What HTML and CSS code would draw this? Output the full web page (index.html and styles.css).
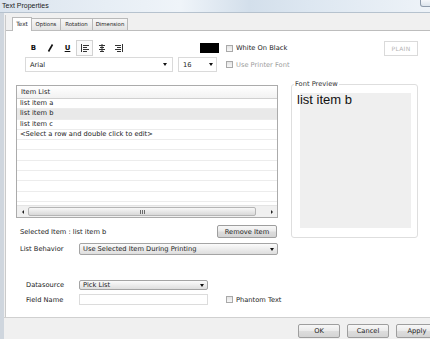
FILE: index.html
```html
<!DOCTYPE html>
<html>
<head>
<meta charset="utf-8">
<link rel="stylesheet" href="styles.css">
</head>
<body>
<div class="win">
  <div class="titlebar">
    <span class="title">Text Properties</span>
    <span class="closebtn"></span>
  </div>
  <div class="frame">
    <div class="tabctl">
      <div class="tabs">
        <div class="tab active w20">Text</div>
        <div class="tab w29">Options</div>
        <div class="tab w32">Rotation</div>
        <div class="tab w35">Dimension</div>
      </div>
      <div class="page">
        <div class="toolbar">
          <div class="tb"><span class="gb">B</span></div>
          <div class="tb"><svg width="7" height="8" viewBox="0 0 7 8"><path d="M1.5 7.5 L5.5 0.5" stroke="#111" stroke-width="1.6"/></svg></div>
          <div class="tb"><span class="gb gu">U</span></div>
          <div class="tb pressed"><svg width="8" height="8" viewBox="0 0 8 8"><path d="M0.5 0v8 M2 1.5h6 M2 3.5h4 M2 5.5h6 M2 7.5h4" stroke="#333" stroke-width="1"/></svg></div>
          <div class="tb"><svg width="8" height="8" viewBox="0 0 8 8"><path d="M4 0v8 M1 1.5h6 M2 3.5h4 M1 5.5h6 M2 7.5h4" stroke="#333" stroke-width="1"/></svg></div>
          <div class="tb"><svg width="8" height="8" viewBox="0 0 8 8"><path d="M7.5 0v8 M0 1.5h6 M2 3.5h4 M0 5.5h6 M2 7.5h4" stroke="#333" stroke-width="1"/></svg></div>
          <div class="swatch"></div>
          <div class="chk ml7"></div>
          <span class="chklabel">White On Black</span>
          <div class="plain">PLAIN</div>
        </div>
        <div class="fontrow">
          <div class="dd font"><span>Arial</span><span class="arrow"></span></div>
          <div class="dd size"><span>16</span><span class="arrow"></span></div>
          <div class="chk ml9"></div>
          <span class="chklabel muted">Use Printer Font</span>
        </div>
        <div class="main">
          <div class="leftcol">
            <div class="list">
              <div class="lhead">Item List</div>
              <div class="lbody">
                <div class="row">list item a</div>
                <div class="row sel">list item b</div>
                <div class="row">list item c</div>
                <div class="row">&lt;Select a row and double click to edit&gt;</div>
                <div class="row"></div>
                <div class="row"></div>
                <div class="row"></div>
                <div class="row"></div>
                <div class="row"></div>
                <div class="row"></div>
                <div class="row"></div>
              </div>
              <div class="hscroll">
                <div class="sarrow left"><span class="tri-l"></span></div>
                <div class="thumb"><span class="grip"></span><span class="grip"></span><span class="grip"></span></div>
                <div class="sarrow right"><span class="tri-r"></span></div>
              </div>
            </div>
            <div class="selrow">
              <span>Selected Item : list item b</span>
              <div class="btn remove">Remove Item</div>
            </div>
            <div class="behrow">
              <span class="lbl">List Behavior</span>
              <div class="dd2 beh"><span>Use Selected Item During Printing</span><span class="arrow"></span></div>
            </div>
          </div>
          <fieldset class="preview">
            <legend>Font Preview</legend>
            <div class="pbox">list item b</div>
          </fieldset>
        </div>
        <div class="dsrow">
          <span class="lbl2">Datasource</span>
          <div class="dd2 ds"><span>Pick List</span><span class="arrow"></span></div>
        </div>
        <div class="fnrow">
          <span class="lbl2">Field Name</span>
          <div class="input"></div>
          <div class="chk ml18"></div>
          <span class="chklabel">Phantom Text</span>
        </div>
      </div>
    </div>
    <div class="footer">
      <div class="btn fbtn">OK</div>
      <div class="btn fbtn">Cancel</div>
      <div class="btn fbtn">Apply</div>
    </div>
  </div>
</div>
</body>
</html>
```

FILE: styles.css
```css
* { box-sizing: border-box; margin: 0; padding: 0; }
html, body { width: 430px; height: 339px; overflow: hidden; }
body {
  font-family: "DejaVu Sans", Verdana, sans-serif;
  font-size: 6.7px;
  color: #222;
  background: #f0f0f0;
}
.win { width: 430px; height: 339px; display: flex; flex-direction: column; overflow: hidden; }

.titlebar {
  height: 13px;
  flex: none;
  display: flex;
  align-items: flex-start;
  background: linear-gradient(90deg, #dbe4ee 0%, #e7eef5 25%, #eff4f9 42%, #d3dfeb 58%, #dde7f1 72%, #eef3f8 100%);
  border-bottom: 1px solid #b6c2ce;
}
.title {
  font-family: "Liberation Sans", Arial, sans-serif;
  font-size: 7px;
  line-height: 11px;
  padding-left: 2px;
  color: #1a1a1a;
}
.closebtn {
  margin-left: auto;
  margin-right: -3px;
  width: 13px;
  height: 7px;
  border: 1px solid #8e9bab;
  border-top: none;
  border-radius: 0 0 0 3px;
  background: linear-gradient(#f5f7fa, #dce4ec);
}

.frame {
  flex: 1;
  display: flex;
  flex-direction: column;
  border-left: 4px solid #cfd6de;
  background: #f0f0f0;
}
.tabctl {
  margin-top: 2px;
  margin-left: 1px;
  border-left: 1px solid #cacaca;
  display: flex;
  flex-direction: column;
}
.tabs {
  height: 16px;
  display: flex;
  align-items: flex-end;
  padding-left: 6px;
  border-bottom: 1px solid #bdbdbd;
}
.tab {
  height: 12px;
  border: 1px solid #b9b9b9;
  border-bottom: none;
  background: linear-gradient(#f7f7f7, #e3e3e3);
  font-size: 5.4px;
  line-height: 11px;
  text-align: center;
  color: #222;
}
.tab + .tab { border-left: none; }
.tab.active {
  height: 14px;
  background: #fff;
  margin-bottom: -1px;
  font-size: 5.8px;
  line-height: 12px;
}
.w20 { width: 20px; }
.w29 { width: 29px; }
.w32 { width: 32px; }
.w35 { width: 35px; }

.page {
  height: 286px;
  background: #fff;
  padding-top: 9px;
  display: flex;
  flex-direction: column;
}

/* toolbar */
.toolbar { display: flex; align-items: center; height: 16px; padding-left: 19px; }
.tb { width: 17px; height: 16px; display: flex; align-items: center; justify-content: center; flex: none; }
.tb.pressed { border: 1px solid #d2d2d2; background: #fafafa; }
.gb { font-weight: bold; font-size: 7px; line-height: 8px; color: #111; }
.gu { text-decoration: underline; }
.swatch { width: 19px; height: 10px; background: #000; margin-left: 73px; flex: none; }
.chk {
  width: 7px; height: 7px; flex: none;
  border: 1px solid #a9a9a9;
  background: linear-gradient(#e4e4e4, #f7f7f7);
}
.ml7 { margin-left: 7px; }
.ml9 { margin-left: 9px; }
.ml18 { margin-left: 18px; }
.chklabel { margin-left: 3px; white-space: nowrap; }
.muted { color: #9c9c9c; }
.plain {
  margin-left: auto;
  margin-right: 12px;
  width: 34px; height: 15px;
  border: 1px solid #dadada;
  color: #b4b4b4;
  font-size: 6px;
  letter-spacing: 0.3px;
  display: flex; align-items: center; justify-content: center;
}

.fontrow { display: flex; align-items: center; height: 15px; margin-top: 1px; padding-left: 19px; }
.dd {
  display: flex; align-items: center; justify-content: space-between;
  border: 1px solid #dadada;
  height: 15px;
  padding: 0 5px 0 4px;
  flex: none;
}
.dd.font { width: 148px; }
.dd.size { width: 39px; margin-left: 5px; padding-right: 3px; }
.arrow {
  width: 0; height: 0;
  border-left: 2.5px solid transparent;
  border-right: 2.5px solid transparent;
  border-top: 3px solid #111;
}

/* main */
.main { display: flex; align-items: flex-start; margin-top: 8px; }
.leftcol { margin-left: 10px; width: 262px; display: flex; flex-direction: column; flex: none; }
.list {
  margin-top: 5px;
  height: 133px;
  border: 1px solid #ababab;
  display: flex; flex-direction: column;
}
.lhead {
  height: 13px; flex: none;
  border-bottom: 1px solid #d0d0d0;
  background: linear-gradient(#fff, #f2f2f2);
  padding-left: 4px;
  line-height: 12px;
}
.lbody { height: 106px; flex: none; overflow: hidden; }
.row {
  height: 10.3px;
  line-height: 9.5px;
  border-bottom: 1px solid #ececec;
  padding-left: 3px;
  white-space: nowrap;
}
.row.sel { background: #e9e9e9; }
.hscroll {
  height: 12px; flex: none;
  display: flex; align-items: center;
  background: #f0f0f0;
  border-top: 1px solid #e4e4e4;
}
.sarrow { height: 100%; display: flex; align-items: center; }
.sarrow.left { width: 11px; justify-content: center; }
.sarrow.right { flex: 1; justify-content: flex-end; padding-right: 4px; }
.tri-l { width: 0; height: 0; border-top: 2px solid transparent; border-bottom: 2px solid transparent; border-right: 2px solid #222; }
.tri-r { width: 0; height: 0; border-top: 2px solid transparent; border-bottom: 2px solid transparent; border-left: 2px solid #222; }
.thumb {
  width: 228px; height: 9px;
  border: 1px solid #b5b5b5;
  border-radius: 2px;
  background: linear-gradient(#f8f8f8, #d8d8d8);
  display: flex; align-items: center; justify-content: center; gap: 1px;
}
.grip { width: 1px; height: 4px; background: #6a6a6a; }

.selrow {
  display: flex; align-items: center; justify-content: space-between;
  margin-top: 7px; height: 13px; padding-left: 4px;
}
.btn {
  height: 13px;
  border: 1px solid #9e9e9e;
  border-radius: 2px;
  background: linear-gradient(#f7f7f7 0%, #ebebeb 48%, #dddddd 52%, #d4d4d4 100%);
  display: flex; align-items: center; justify-content: center;
  color: #222;
  flex: none;
}
.btn.remove { width: 60px; margin-right: 1px; }

.behrow { display: flex; align-items: center; margin-top: 5px; height: 12px; }
.lbl { width: 63px; padding-left: 4px; flex: none; }
.dd2 {
  border: 1px solid #a4a4a4;
  border-radius: 2px;
  background: linear-gradient(#fbfbfb, #dedede);
  display: flex; align-items: center; justify-content: space-between;
  padding: 0 3px 0 3px;
  flex: none;
}
.dd2.beh { width: 199px; height: 12px; }
.dd2.ds { width: 129px; height: 10px; }

fieldset.preview {
  margin-left: 13px;
  width: 127px;
  border: 1px solid #dedede;
  border-radius: 3px;
  padding: 5px 6px 9px 8px;
  min-width: 0;
  flex: none;
}
legend {
  padding: 0 1px;
  margin-left: -6px;
  font-size: 6.7px;
  line-height: 8px;
  color: #333;
}
.pbox {
  height: 135px;
  background: #efefef;
  font-family: "Liberation Sans", Arial, sans-serif;
  font-size: 13px;
  line-height: 14px;
  color: #111;
  text-indent: -3px;
}

.dsrow { display: flex; align-items: center; margin-top: 25px; height: 10px; }
.fnrow { display: flex; align-items: center; margin-top: 4px; height: 11px; }
.lbl2 { width: 73px; padding-left: 20px; flex: none; }
.input { width: 129px; height: 11px; border: 1px solid #dcdcdc; background: #fff; flex: none; }

.footer {
  height: 22px;
  flex: none;
  border-top: 1px solid #d0d0d0;
  background: #f0f0f0;
  display: flex;
  align-items: flex-start;
  padding-top: 6px;
  padding-left: 294px;
  gap: 7px;
  overflow: hidden;
}
.fbtn { width: 42px; height: 14px; }
```
